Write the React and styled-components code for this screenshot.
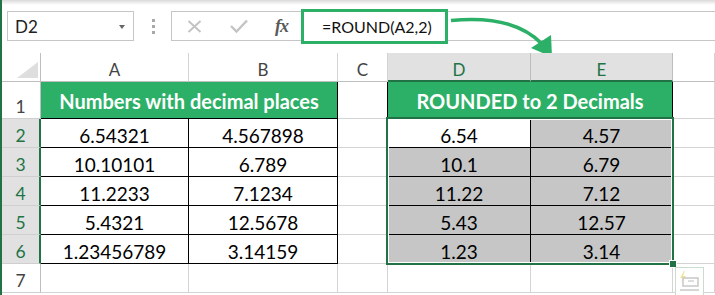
import { Fragment } from 'react';
import styled, { createGlobalStyle } from 'styled-components';

const GlobalStyle = createGlobalStyle`
  html, body { margin: 0; padding: 0; background: #fff; }
  body { font-family: Lato, "Open Sans", sans-serif; }
`;

const XL_GREEN = '#217346';
const NOTE_GREEN = '#2cb067';
const GRID = '#d4d4d4';

const Page = styled.div`
  position: relative;
  width: 715px;
  height: 295px;
  overflow: hidden;
  box-sizing: border-box;
  border-left: 2px solid ${XL_GREEN};
  background: linear-gradient(#dadada 0, #fff 5px);
`;

const FormulaBar = styled.div`
  display: flex;
  height: 30px;
  margin-top: 11px;
`;

const NameBox = styled.div`
  width: 127px;
  margin-left: 5px;
  box-sizing: border-box;
  border: 1px solid #c6c6c6;
  display: flex;
  align-items: center;
  justify-content: space-between;
  padding: 1px 8px 0 7px;
  font-size: 17px;
  color: #222;
`;

const DropArrow = styled.span`
  width: 0;
  height: 0;
  border-left: 3.5px solid transparent;
  border-right: 3.5px solid transparent;
  border-top: 4px solid #666;
`;

const Grip = styled.div`
  width: 37px;
  display: flex;
  flex-direction: column;
  align-items: center;
  justify-content: center;
  gap: 3px;
  padding-left: 2px;
  box-sizing: border-box;

  span {
    width: 3px;
    height: 3px;
    background: #a8a8a8;
  }
`;

const FormulaBox = styled.div`
  flex: 1;
  box-sizing: border-box;
  border: 1px solid #c6c6c6;
  border-right: none;
  display: flex;
  align-items: center;
  padding-left: 15px;
`;

const ToolIcon = styled.span`
  display: flex;
  align-items: center;
  margin-right: ${p => p.$gap}px;
`;

const Fx = styled.span`
  font-family: "Liberation Serif", "DejaVu Serif", serif;
  font-style: italic;
  font-weight: bold;
  font-size: 18px;
  color: #595959;
  margin-right: 13px;
  letter-spacing: -1px;
`;

const FormulaInput = styled.div`
  width: 147px;
  height: 35px;
  flex-shrink: 0;
  box-sizing: border-box;
  border: 3px solid ${NOTE_GREEN};
  background: #fff;
  display: flex;
  align-items: center;
  padding: 1px 0 0 18px;
  font-size: 16px;
  color: #111;
`;

const Arrow = styled.svg`
  position: absolute;
  left: 448px;
  top: 10px;
  overflow: visible;
`;

const Sheet = styled.div`
  position: relative;
  margin-top: 12px;
  display: grid;
  grid-template-columns: 39px 148px 149px 50px 143px 142px 1fr;
  grid-template-rows: 29px 37px repeat(6, 29px);
`;

const Corner = styled.div`
  box-sizing: border-box;
  border-right: 1px solid #bfbfbf;
  border-bottom: 1px solid #bfbfbf;
  display: flex;
  justify-content: flex-end;
  align-items: flex-end;
  padding: 0 2px 3px 0;

  span {
    width: 0;
    height: 0;
    border-left: 21px solid transparent;
    border-bottom: 16px solid #dedede;
  }
`;

const ColHeader = styled.div`
  box-sizing: border-box;
  border-right: 1px solid ${p => (p.$sel ? '#bdbdbd' : GRID)};
  border-bottom: ${p => (p.$sel ? `2px solid ${XL_GREEN}` : '1px solid #bfbfbf')};
  background: ${p => (p.$sel ? '#e1e1e1' : '#fff')};
  color: ${p => (p.$sel ? XL_GREEN : '#444')};
  display: flex;
  justify-content: center;
  align-items: flex-end;
  padding-bottom: ${p => (p.$sel ? 2 : 3)}px;
  font-size: 17px;
  line-height: 1;
`;

const RowHeader = styled.div`
  box-sizing: border-box;
  border-right: ${p => (p.$sel ? `2px solid ${XL_GREEN}` : '1px solid #bfbfbf')};
  border-bottom: 1px solid #cfcfcf;
  background: ${p => (p.$sel ? '#e1e1e1' : '#fff')};
  color: ${p => (p.$sel ? XL_GREEN : '#444')};
  display: flex;
  justify-content: center;
  align-items: flex-end;
  padding: 0 ${p => (p.$sel ? 0 : 1)}px 3px 0;
  font-size: 17.5px;
  line-height: 1;
`;

const Cell = styled.div`
  box-sizing: border-box;
  border-right: 1px solid ${p => (p.$boxed || p.$edge ? '#000' : GRID)};
  border-bottom: 1px solid ${p => (p.$boxed ? '#000' : GRID)};
  background: ${p => (p.$shade ? '#c6c6c6' : '#fff')};
  display: flex;
  justify-content: center;
  align-items: flex-end;
  padding-bottom: 2px;
  font-size: 19px;
  line-height: 1;
  color: #000;
`;

const Title = styled.div`
  grid-column: span 2;
  box-sizing: border-box;
  border-right: 1px solid #000;
  border-bottom: 1px solid #000;
  background: ${NOTE_GREEN};
  color: #fff;
  font-weight: bold;
  font-size: 20px;
  line-height: 1;
  display: flex;
  justify-content: center;
  align-items: center;
  padding-top: 1px;
`;

/* overlay on the selected range D2:E6, placed by grid lines */
const Selection = styled.div`
  position: absolute;
  grid-column: 5 / 7;
  grid-row: 3 / 8;
  top: -2px;
  left: -2px;
  right: -1px;
  bottom: -1px;
  border: 2px solid ${XL_GREEN};
  box-shadow: inset 0 0 0 1px #fff;
  pointer-events: none;
`;

const FillHandle = styled.span`
  position: absolute;
  right: -4px;
  bottom: -4px;
  width: 6px;
  height: 6px;
  background: ${XL_GREEN};
  outline: 1px solid #fff;
`;

const QuickAnalysis = styled.svg`
  position: absolute;
  right: -32px;
  bottom: -33px;
`;

const colLetters = ['A', 'B', 'C', 'D', 'E', ''];

const rows = [
  ['6.54321', '4.567898', '6.54', '4.57'],
  ['10.10101', '6.789', '10.1', '6.79'],
  ['11.2233', '7.1234', '11.22', '7.12'],
  ['5.4321', '12.5678', '5.43', '12.57'],
  ['1.23456789', '3.14159', '1.23', '3.14'],
];

const App = () => {
  return (
    <Page>
      <GlobalStyle />
      <FormulaBar>
        <NameBox>
          D2
          <DropArrow />
        </NameBox>
        <Grip>
          <span />
          <span />
          <span />
        </Grip>
        <FormulaBox>
          <ToolIcon $gap={28}>
            <svg width="15" height="13" viewBox="0 0 15 13">
              <path d="M1.5 1 L13.5 12 M13.5 1 L1.5 12" stroke="#c3c3c3" strokeWidth="2" fill="none" />
            </svg>
          </ToolIcon>
          <ToolIcon $gap={27}>
            <svg width="18" height="14" viewBox="0 0 18 14">
              <path d="M1 7 L6.5 12.5 L17 1.5" stroke="#c3c3c3" strokeWidth="2.4" fill="none" />
            </svg>
          </ToolIcon>
          <Fx>fx</Fx>
          <FormulaInput>=ROUND(A2,2)</FormulaInput>
        </FormulaBox>
      </FormulaBar>

      <Arrow width="110" height="52" viewBox="450 10 110 52">
        <path d="M451 20.5 C 492 16.5, 522 23, 542 44" stroke={NOTE_GREEN} strokeWidth="3.6" fill="none" />
        <polygon points="551,35 531,48 552,57" fill={NOTE_GREEN} />
      </Arrow>

      <Sheet>
        <Corner>
          <span />
        </Corner>
        {colLetters.map((c, i) => (
          <ColHeader key={i} $sel={c === 'D' || c === 'E'}>
            {c}
          </ColHeader>
        ))}

        <RowHeader>1</RowHeader>
        <Title>Numbers with decimal places</Title>
        <Cell $edge />
        <Title>ROUNDED to 2 Decimals</Title>
        <Cell />

        {rows.map((r, i) => (
          <Fragment key={i}>
            <RowHeader $sel>{i + 2}</RowHeader>
            <Cell $boxed>{r[0]}</Cell>
            <Cell $boxed>{r[1]}</Cell>
            <Cell />
            <Cell $boxed $shade={i > 0}>{r[2]}</Cell>
            <Cell $boxed $shade>{r[3]}</Cell>
            <Cell />
          </Fragment>
        ))}

        <RowHeader>7</RowHeader>
        {colLetters.map((c, i) => (
          <Cell key={`r7${i}`} />
        ))}

        <Selection>
          <FillHandle />
          <QuickAnalysis width="29" height="29" viewBox="0 0 29 29">
            <rect x="0.5" y="0.5" width="28" height="28" fill="#fff" stroke="#c9ddcf" />
            <path d="M9 4 L5 11 L8 11 L6 16 L11 9 L8 9 L10 4 Z" fill="#f1e49a" />
            <rect x="8" y="11" width="15" height="8" fill="none" stroke="#c8c8c8" strokeWidth="1.5" />
            <path d="M5 23 H24" stroke="#c8c8c8" strokeWidth="1.5" />
            <path d="M13 14 H19" stroke="#c8c8c8" strokeWidth="1.2" />
          </QuickAnalysis>
        </Selection>
      </Sheet>
    </Page>
  );
};

export default App;
